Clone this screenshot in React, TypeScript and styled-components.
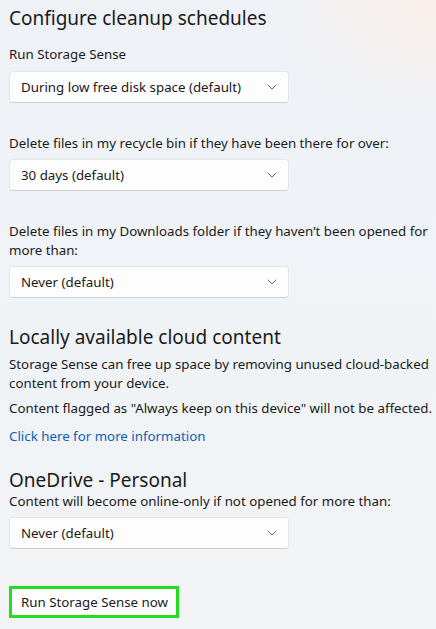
import styled, { createGlobalStyle } from 'styled-components'

const GlobalStyle = createGlobalStyle`
  html, body {
    margin: 0;
    padding: 0;
  }

  body {
    min-height: 629px;
    font-family: 'Segoe UI', 'Noto Sans', 'Open Sans', sans-serif;
    color: #1a1a1a;
    background:
      radial-gradient(ellipse 180px 120px at 100% 0%, rgba(250, 238, 232, 0.9), rgba(250, 238, 232, 0) 100%),
      linear-gradient(180deg, #eef2f7 0%, #f0f3f6 60%, #f2f3f5 100%);
  }
`

const Page = styled.main`
  display: flex;
  flex-direction: column;
  align-items: flex-start;
  padding: 6px 2px 0 9px;
`

const Heading = styled.h2<{ $top?: number }>`
  margin: ${({ $top }) => $top ?? 0}px 0 0;
  font-size: 19px;
  font-weight: 400;
  line-height: 24px;
`

const Label = styled.div<{ $top: number }>`
  margin-top: ${({ $top }) => $top}px;
  font-size: 13.3px;
  line-height: 19px;
`

const Text = styled.p<{ $top: number }>`
  margin: ${({ $top }) => $top}px 0 0;
  font-size: 13.3px;
  line-height: 19px;
`

const MoreLink = styled.a`
  margin-top: 9px;
  font-size: 13.3px;
  line-height: 19px;
  color: #0d5fb4;
  text-decoration: none;
  cursor: pointer;
`

const Select = styled.button<{ $top: number }>`
  display: flex;
  align-items: center;
  justify-content: space-between;
  box-sizing: border-box;
  width: 280px;
  height: 32px;
  margin-top: ${({ $top }) => $top}px;
  padding: 0 11px;
  border: 1px solid #e6e6e6;
  border-bottom-color: #cfcfcf;
  border-radius: 4px;
  background: #fdfdfd;
  font-family: inherit;
  font-size: 13.3px;
  color: #1a1a1a;
  text-align: left;
  cursor: pointer;

  svg {
    flex-shrink: 0;
  }
`

const RunButton = styled.button`
  box-sizing: border-box;
  height: 32px;
  margin-top: 37px;
  padding: 0 8px 0 9px;
  border: 3px solid #22dd22;
  background: #fdfdfd;
  font-family: inherit;
  font-size: 13.3px;
  color: #1a1a1a;
  cursor: pointer;
`

const Chevron = () => (
  <svg width="10" height="6" viewBox="0 0 10 6" fill="none">
    <path d="M1 1L5 5L9 1" stroke="#6a6a6a" strokeWidth="1" strokeLinecap="round" strokeLinejoin="round" />
  </svg>
)

const Dropdown = ({ value, top }: { value: string; top: number }) => (
  <Select $top={top}>
    <span>{value}</span>
    <Chevron />
  </Select>
)

const App = () => (
  <>
    <GlobalStyle />
    <Page>
      <Heading>Configure cleanup schedules</Heading>

      <Label $top={15}>Run Storage Sense</Label>
      <Dropdown top={7} value="During low free disk space (default)" />

      <Label $top={31}>Delete files in my recycle bin if they have been there for over:</Label>
      <Dropdown top={6} value="30 days (default)" />

      <Label $top={31}>
        Delete files in my Downloads folder if they haven’t been opened for more than:
      </Label>
      <Dropdown top={6} value="Never (default)" />

      <Heading $top={27}>Locally available cloud content</Heading>
      <Text $top={6}>
        Storage Sense can free up space by removing unused cloud-backed content from your device.
      </Text>
      <Text $top={6}>Content flagged as "Always keep on this device" will not be affected.</Text>
      <MoreLink>Click here for more information</MoreLink>

      <Heading $top={22}>OneDrive - Personal</Heading>
      <Text $top={0}>Content will become online-only if not opened for more than:</Text>
      <Dropdown top={6} value="Never (default)" />

      <RunButton>Run Storage Sense now</RunButton>
    </Page>
  </>
)

export default App
